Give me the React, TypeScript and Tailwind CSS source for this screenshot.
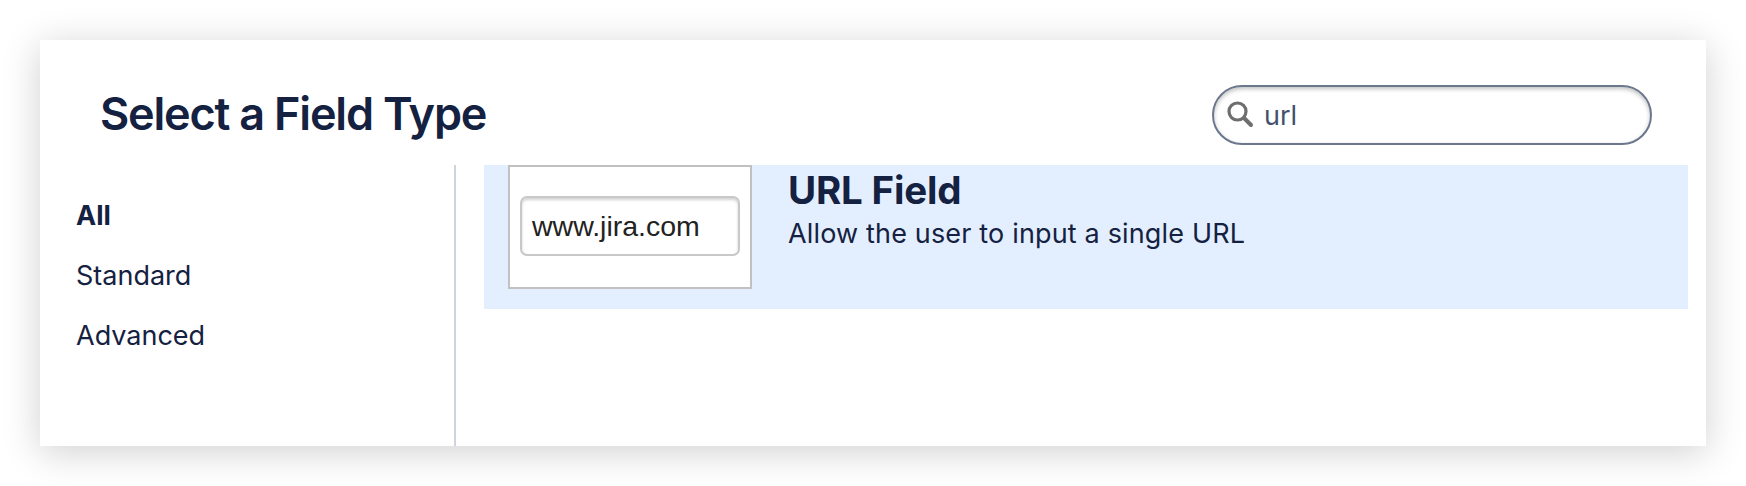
export default function App() {
  return (
    <div className="w-[1746px] h-[486px] bg-white p-10 font-['Inter',sans-serif] text-[#152141] overflow-hidden">
      <div className="w-[1666px] h-[406px] bg-white flex flex-col shadow-[0_6px_36px_rgba(0,0,0,0.19)]">
        <div className="h-[125px] shrink-0 flex items-start justify-between pl-[60px] pr-[54px]">
          <h1 className="mt-[47px] text-[45px] leading-[54px] font-semibold tracking-[-1.2px]">Select a Field Type</h1>
          <div className="mt-[45px] w-[440px] h-[60px] rounded-[30px] border-2 border-[#6b778c] shadow-[inset_0_2px_4px_rgba(0,0,0,0.25)] flex items-center pl-[12px]">
            <svg width="32" height="32" viewBox="0 0 32 32" fill="none" className="shrink-0">
              <circle cx="11.5" cy="12.5" r="8.5" stroke="#6e6e6e" strokeWidth="3.2" />
              <path d="M18.5 19.5L25 26" stroke="#6e6e6e" strokeWidth="4" strokeLinecap="round" />
            </svg>
            <span className="ml-[6px] mt-[2px] text-[27px] text-[#42526e]">url</span>
          </div>
        </div>
        <div className="flex-1 flex min-h-0">
          <nav className="w-[416px] shrink-0 border-r-2 border-[#d0d4e0] pl-[36px] pt-[31px] flex flex-col gap-[20px] text-[27px] leading-[40px]">
            <div className="font-bold">All</div>
            <div>Standard</div>
            <div>Advanced</div>
          </nav>
          <div className="flex-1 pl-[28px] pr-[18px]">
            <div className="h-[144px] bg-[#e3efff] flex items-start pl-[24px]">
              <div className="w-[244px] h-[124px] shrink-0 bg-white border-2 border-[#c1c1c1] flex items-center pl-[10px]">
                <div className="w-[220px] h-[60px] mt-[-2px] bg-white rounded-[7px] border-2 border-[#c8c8c8] shadow-[inset_0_2px_3px_rgba(0,0,0,0.18)] flex items-center pl-[10px] pt-[1px] font-['Liberation_Sans',sans-serif] text-[28.5px] text-[#222]">
                  www.jira.com
                </div>
              </div>
              <div className="ml-[36px]">
                <div className="text-[38.5px] leading-[46px] font-bold tracking-[-0.2px] mt-[2px]">URL Field</div>
                <div className="text-[27px] leading-[36px] mt-[3px] tracking-[0.16px]">Allow the user to input a single URL</div>
              </div>
            </div>
          </div>
        </div>
      </div>
    </div>
  );
}
